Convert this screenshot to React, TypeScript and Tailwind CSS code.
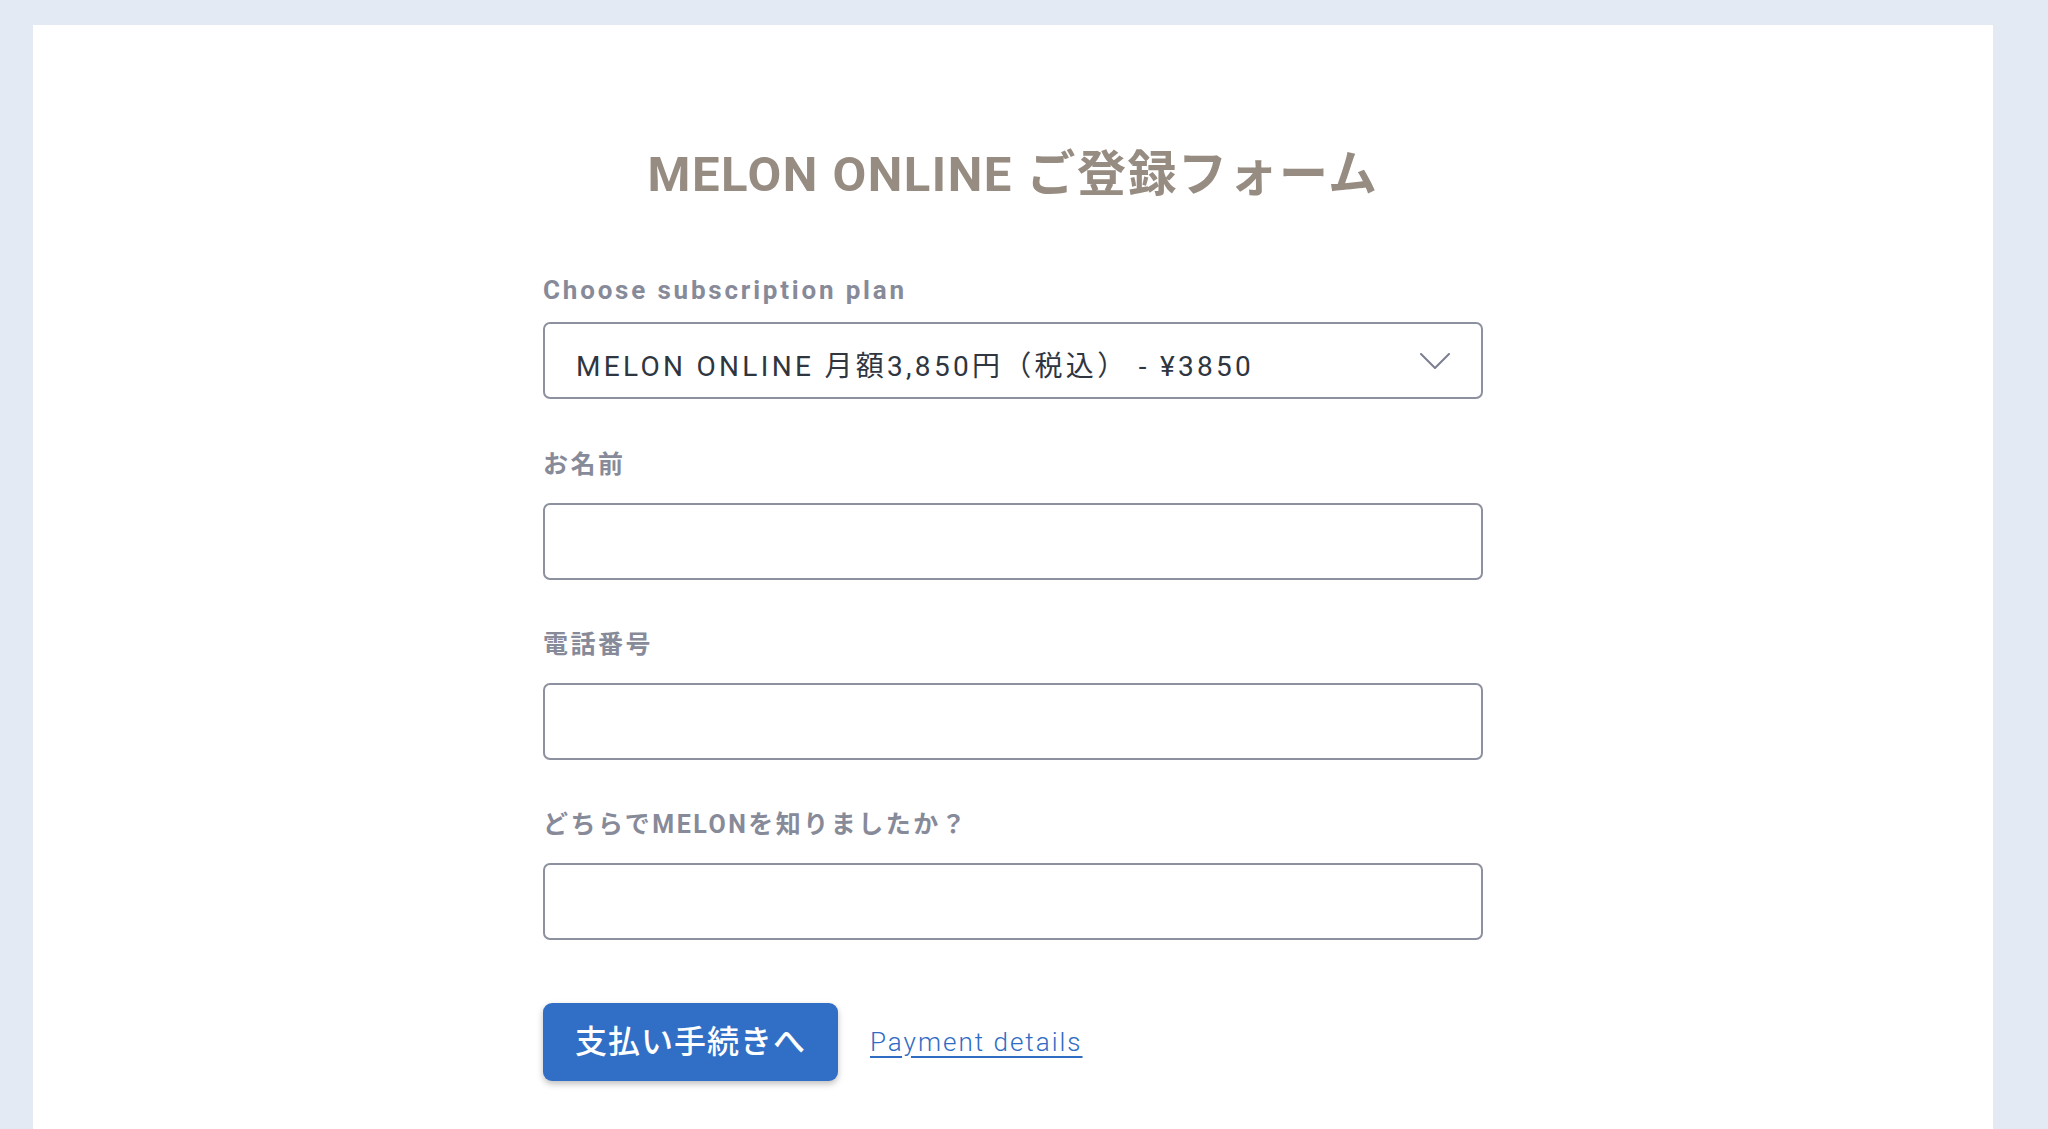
import { ChangeEvent, useState } from "react";

const FONT = "font-['Roboto','Noto_Sans_CJK_JP',sans-serif]";

interface FieldProps {
  label: string;
  value: string;
  onChange: (v: string) => void;
  className?: string;
}

// Plain text input with a label above it
const TextField = ({ label, value, onChange, className = "" }: FieldProps) => (
  <div className={className}>
    <label className="block h-[32px] mb-[22px] text-[25px] leading-[32px] font-bold tracking-[2.5px] text-[#878a99]">
      {label}
    </label>
    <input
      type="text"
      value={value}
      onChange={(e: ChangeEvent<HTMLInputElement>) => onChange(e.target.value)}
      className="block w-full h-[77px] rounded-[7px] border-2 border-[#8d909e] bg-white px-[32px] text-[28px] text-[#30363f] outline-none"
    />
  </div>
);

export default function App() {
  const [name, setName] = useState("");
  const [phone, setPhone] = useState("");
  const [source, setSource] = useState("");

  return (
    <div className={`min-h-screen bg-[#e3eaf4] pt-[25px] pl-[33px] pr-[55px] ${FONT}`}>
      <div className="w-[1960px] min-h-[1104px] bg-white pt-[120px]">
        <div className="w-[940px] mx-auto">
          <h1 className="h-[60px] text-center text-[49px] leading-[60px] font-bold tracking-[1.5px] text-[#978c81]">
            MELON ONLINE ご登録フォーム
          </h1>

          {/* plan */}
          <div className="mt-[69px]">
            <label className="block h-[32px] mb-[16px] text-[26px] leading-[32px] font-bold tracking-[2.8px] text-[#878a99]">
              Choose subscription plan
            </label>
            <div className="flex items-center justify-between h-[77px] rounded-[7px] border-2 border-[#8d909e] bg-white pl-[31px] pr-[31px]">
              <span className="pt-[12px] text-[28px] leading-[36px] tracking-[3.3px] text-[#30363f]">
                MELON ONLINE 月額3,850円（税込） - ¥3850
              </span>
              <svg width="30" height="16" viewBox="0 0 30 16" fill="none">
                <polyline
                  points="1,1 15,15 29,1"
                  stroke="#7b7f8e"
                  strokeWidth="2"
                  strokeLinecap="round"
                  strokeLinejoin="round"
                />
              </svg>
            </div>
          </div>

          <TextField label="お名前" value={name} onChange={setName} className="mt-[50px]" />
          <TextField label="電話番号" value={phone} onChange={setPhone} className="mt-[49px]" />
          <TextField
            label="どちらでMELONを知りましたか？"
            value={source}
            onChange={setSource}
            className="mt-[49px]"
          />

          <div className="flex items-center mt-[63px]">
            <button className="flex items-center justify-center w-[295px] h-[78px] rounded-[9px] bg-[#316fc6] text-white text-[32px] font-medium tracking-[1px] shadow-[0_3px_6px_rgba(0,0,0,0.25)]">
              支払い手続きへ
            </button>
            <a href="#" className="ml-[32px] text-[26px] font-light tracking-[2px] text-[#2f6cc4] underline underline-offset-[5px]">
              Payment details
            </a>
          </div>
        </div>
      </div>
    </div>
  );
}
